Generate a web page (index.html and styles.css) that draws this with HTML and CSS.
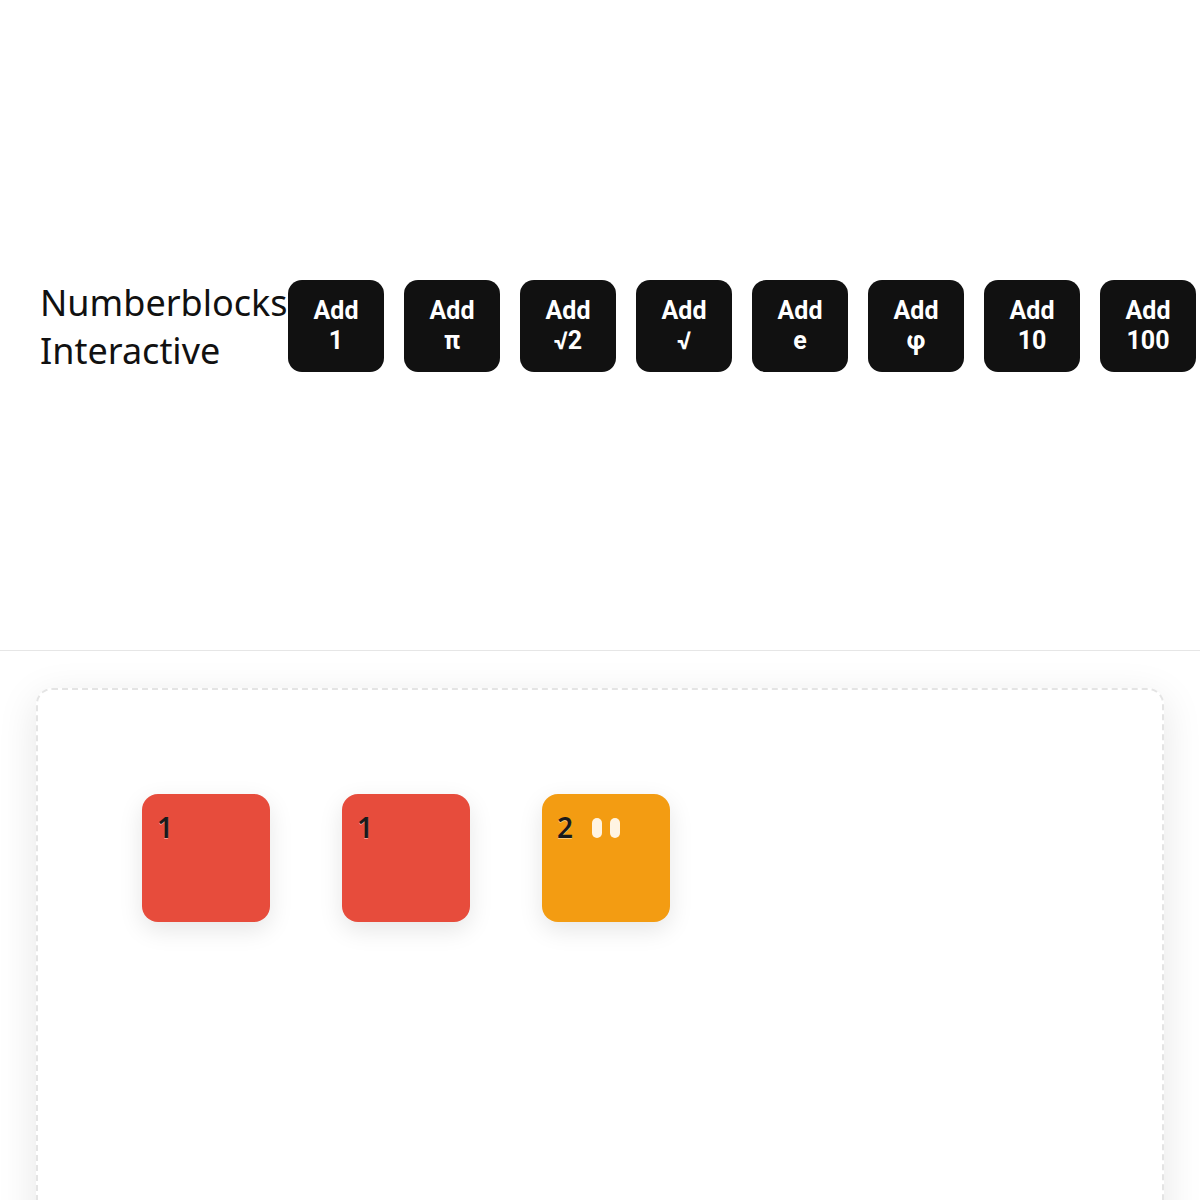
FILE: index.html
```html
<!DOCTYPE html>
<html>
<head>
<meta charset="utf-8">
<link rel="stylesheet" href="styles.css">
</head>
<body>
<header class="header">
  <h1 class="title">Numberblocks Interactive</h1>
  <div class="controls">
    <button class="add-btn">Add<br>1</button>
    <button class="add-btn">Add<br>π</button>
    <button class="add-btn">Add<br>√2</button>
    <button class="add-btn">Add<br>√</button>
    <button class="add-btn">Add<br>e</button>
    <button class="add-btn">Add<br>φ</button>
    <button class="add-btn">Add<br>10</button>
    <button class="add-btn">Add<br>100</button>
  </div>
</header>
<main class="stage">
  <div class="canvas">
    <div class="block red" style="left:104px">
      <span class="num">1</span>
    </div>
    <div class="block red" style="left:304px">
      <span class="num">1</span>
    </div>
    <div class="block orange" style="left:504px">
      <span class="num">2</span>
      <div class="eyes"><span class="eye"></span><span class="eye"></span></div>
    </div>
  </div>
</main>
</body>
</html>
```
FILE: styles.css
```css
html, body {
  margin: 0;
  padding: 0;
  background: #ffffff;
  overflow: hidden;
}
body {
  width: 1200px;
  height: 1200px;
  font-family: "Noto Sans", "Open Sans", sans-serif;
}
.header {
  height: 646px;
  padding-top: 4px;
  border-bottom: 1px solid #e6e6e6;
  display: flex;
  align-items: center;
  padding-left: 40px;
  box-sizing: content-box;
}
.title {
  flex: 0 0 248px;
  margin: 0;
  font-weight: 400;
  font-size: 36px;
  line-height: 48px;
  color: #111;
}
.controls {
  display: flex;
  gap: 20px;
  margin-top: -2px;
}
.add-btn {
  flex: 0 0 96px;
  width: 96px;
  height: 92px;
  border: none;
  border-radius: 14px;
  background: #111111;
  color: #fff;
  font-family: Roboto, "Liberation Sans", sans-serif;
  font-weight: 700;
  font-size: 25px;
  line-height: 30px;
  padding: 0;
  text-align: center;
}
.stage {
  padding: 37px 36px 0;
}
.canvas {
  position: relative;
  height: 700px;
  border: 2px dashed #e4e4e4;
  border-radius: 16px;
  box-shadow: 0 10px 40px rgba(0, 0, 0, 0.1);
  background: #fff;
}
.block {
  position: absolute;
  top: 104px;
  width: 128px;
  height: 128px;
  border-radius: 16px;
  box-shadow: 0 8px 24px rgba(0, 0, 0, 0.1);
}
.red { background: #e74c3c; }
.orange { background: #f39c12; }
.num {
  position: absolute;
  left: 15px;
  top: 19px;
  font-size: 28px;
  font-weight: 600;
  line-height: 28px;
  color: #1a1a1a;
  text-shadow: 0 1px 0 rgba(255, 255, 255, 0.45);
}
.eyes {
  position: absolute;
  top: 24px;
  left: 0;
  right: 0;
  display: flex;
  justify-content: center;
  gap: 8px;
}
.eye {
  width: 10px;
  height: 20px;
  border-radius: 5px;
  background: #fff4e2;
}
```
